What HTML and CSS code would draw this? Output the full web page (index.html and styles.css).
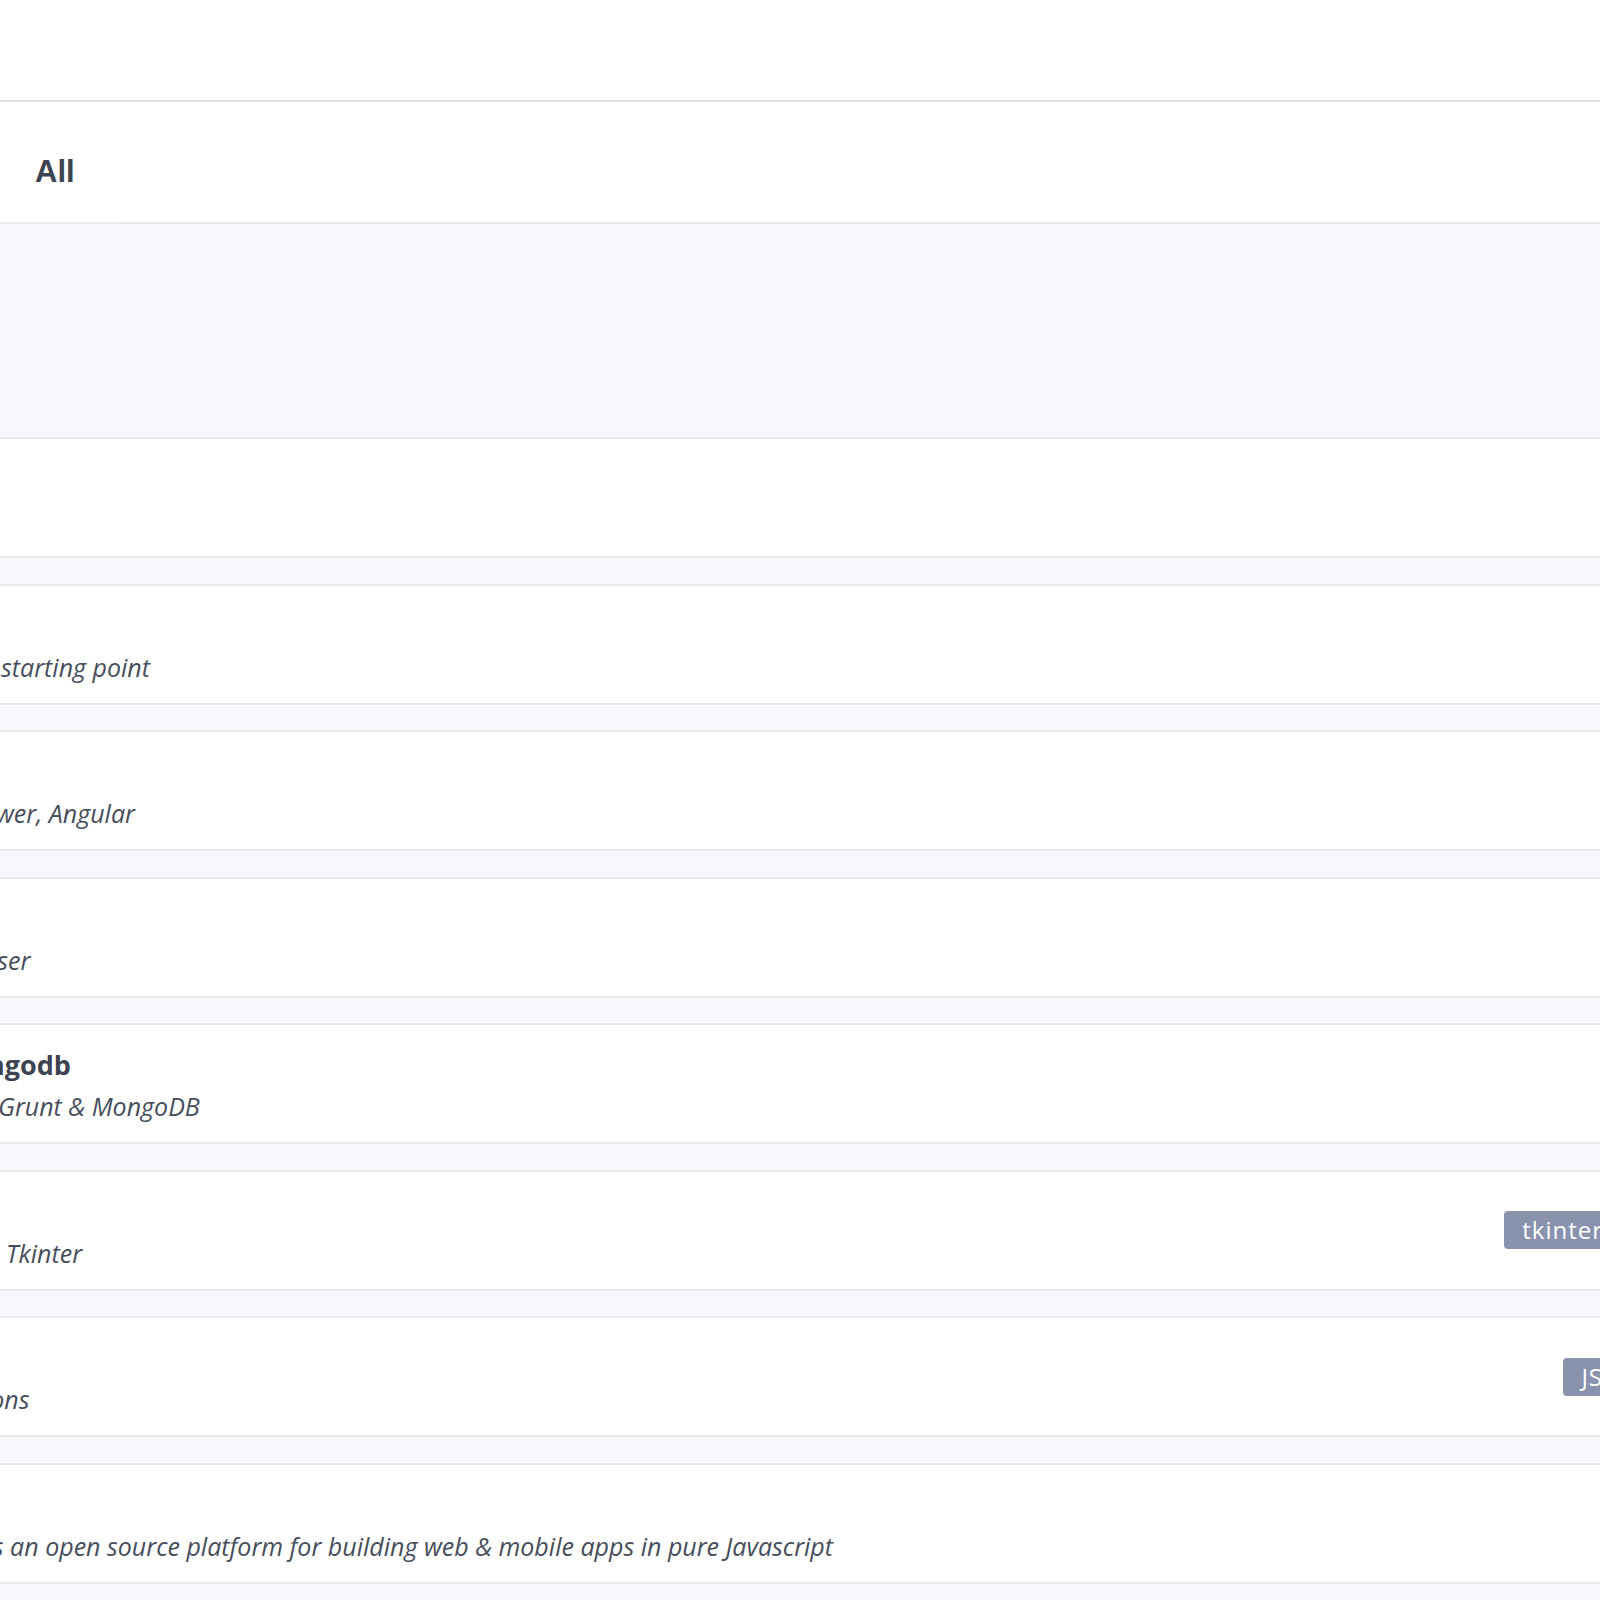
FILE: index.html
```html
<!DOCTYPE html>
<html lang="en">
<head>
<meta charset="utf-8">
<title>Templates</title>
<link rel="stylesheet" href="styles.css">
</head>
<body>
<div class="app">
  <header class="topbar"></header>
  <nav class="tabs">
    <div class="tab tab-active">All</div>
  </nav>
  <main class="content">
    <div class="filters"></div>
    <ul class="list">
      <li class="card">
        <div class="info">
          <div class="title">Blank</div>
          <div class="desc">Empty</div>
        </div>
        <div class="tags"></div>
      </li>
      <li class="card">
        <div class="info">
          <div class="title">Basic</div>
          <div class="desc">A simple starting point</div>
        </div>
        <div class="tags"></div>
      </li>
      <li class="card">
        <div class="info">
          <div class="title">Gulp</div>
          <div class="desc">Gulp, Bower, Angular</div>
        </div>
        <div class="tags"></div>
      </li>
      <li class="card">
        <div class="info">
          <div class="title">Web</div>
          <div class="desc">My browser</div>
        </div>
        <div class="tags"></div>
      </li>
      <li class="card">
        <div class="info">
          <div class="title">ng-mongodb</div>
          <div class="desc">Express, Grunt &amp; MongoDB</div>
        </div>
        <div class="tags"></div>
      </li>
      <li class="card">
        <div class="info">
          <div class="title">GUI</div>
          <div class="desc">Python + Tkinter</div>
        </div>
        <div class="tags"><span class="tag">tkinter</span></div>
      </li>
      <li class="card">
        <div class="info">
          <div class="title">Node</div>
          <div class="desc">JS functions</div>
        </div>
        <div class="tags"><span class="tag">JS</span></div>
      </li>
      <li class="card">
        <div class="info">
          <div class="title">Meteor</div>
          <div class="desc">Meteor is an open source platform for building web &amp; mobile apps in pure Javascript</div>
        </div>
        <div class="tags"></div>
      </li>
    </ul>
  </main>
</div>
</body>
</html>
```
FILE: styles.css
```css
html, body {
  margin: 0;
  padding: 0;
  background: #ffffff;
  overflow: hidden;
}

body {
  font-family: "Open Sans", "Liberation Sans", sans-serif;
  color: #3d4451;
}

.app {
  width: 1600px;
  min-height: 1600px;
  overflow: hidden;
}

.topbar {
  height: 100px;
  background: #ffffff;
  border-bottom: 2px solid #dcdee9;
}

.tabs {
  display: flex;
  height: 120px;
  background: #ffffff;
  border-bottom: 2px solid #e6e7ed;
}

.tab {
  box-sizing: border-box;
  width: 117px;
  height: 122px;
  padding: 53px 0 0 35px;
  font-family: "Liberation Sans", Arial, sans-serif;
  font-weight: 700;
  font-size: 31px;
  line-height: 34px;
  color: #3d4451;
  background: #ffffff;
}

.tab-active {
  border-bottom: 2px solid #ebecf0;
}

.content {
  background: #f7f8fb;
  padding-bottom: 40px;
}

.filters {
  height: 213px;
}

.list {
  list-style: none;
  margin: 0 0 0 -120px;
  padding: 0;
  width: 1760px;
  display: flex;
  flex-direction: column;
  gap: 25.57px;
}

.card {
  box-sizing: border-box;
  height: 121px;
  display: flex;
  align-items: flex-start;
  justify-content: space-between;
  padding: 22px 19px 0 22px;
  background: #ffffff;
  border-top: 2px solid #e8e9ee;
  border-bottom: 2px solid #e8e9ee;
}

.info {
  display: flex;
  flex-direction: column;
  white-space: nowrap;
}

.title {
  font-weight: 700;
  font-size: 27px;
  line-height: 36px;
  color: #3d4451;
}

.desc {
  margin-top: 6px;
  font-style: italic;
  font-size: 25px;
  line-height: 34px;
  color: #474e5b;
}

.tags {
  align-self: center;
  display: flex;
  gap: 8px;
  margin-top: -22px;
}

.tag {
  display: inline-block;
  padding: 0 18px;
  height: 38px;
  line-height: 38px;
  border-radius: 4px;
  background: #8a93ae;
  color: #ffffff;
  font-size: 24px;
  letter-spacing: 1px;
}
```
